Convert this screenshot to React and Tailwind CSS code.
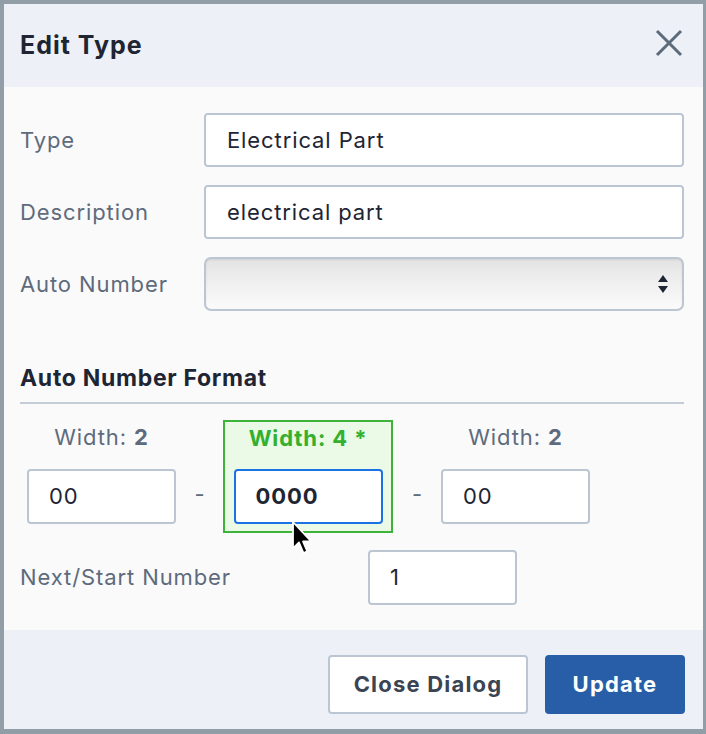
import React from "react";

function Cursor() {
  return (
    <svg className="absolute left-[285px] top-[514px]" width="26" height="40" viewBox="0 0 26 40">
      <path d="M4 4 L4 30.5 L10 24.5 L14.5 35 L18.3 33.3 L14 23.5 L22.2 23.5 Z" fill="#000" stroke="#fff" strokeWidth="1.8" strokeLinejoin="round" />
    </svg>
  );
}

const lbl = "text-[22px] tracking-[0.9px] text-[#5e6b7c]";
const inp = "bg-white border-2 border-[#bcc6d2] rounded-[4px] flex items-center text-[22px] tracking-[0.9px] text-[#1e2533]";

export default function App() {
  const font = { fontFamily: "Inter, 'Noto Sans', sans-serif" };
  return (
    <div style={font} className="relative w-[706px] h-[734px] border-[#919ea7] border-t-4 border-l-4 border-r-[3px] border-b-[5px] bg-[#fafafa] flex flex-col">
      <div className="h-[83px] bg-[#edf0f6] flex items-center justify-between pl-4 pr-[20px] shrink-0">
        <h1 className="text-[25px] font-bold text-[#1e2533] tracking-[1px]">Edit Type</h1>
        <svg width="28" height="28" viewBox="0 0 28 28" className="mt-[-6px]">
          <path d="M2 2 L26 26 M26 2 L2 26" stroke="#5c6b7b" strokeWidth="3" strokeLinecap="butt" />
        </svg>
      </div>

      <div className="flex-1 pl-4 pr-[18px] pt-[26px]">
        <div className="flex flex-col gap-[18px]">
          <div className="flex items-center">
            <label className={`w-[184px] ${lbl}`}>Type</label>
            <div className={`w-[480px] h-[54px] px-[21px] ${inp}`}>Electrical Part</div>
          </div>
          <div className="flex items-center">
            <label className={`w-[184px] ${lbl}`}>Description</label>
            <div className={`w-[480px] h-[54px] px-[21px] ${inp}`}>electrical part</div>
          </div>
          <div className="flex items-center">
            <label className={`w-[184px] ${lbl}`}>Auto Number</label>
            <div className="w-[480px] h-[54px] border-2 border-[#bcc6d2] rounded-[7px] flex items-center justify-end pr-[14px] bg-gradient-to-b from-[#e3e3e3] via-[#f0f0f0] to-[#fbfbfb] shadow-[inset_0_1px_2px_rgba(0,0,0,0.08)]">
              <svg width="10" height="20" viewBox="0 0 10 20">
                <path d="M5 1 L10 8 L0 8 Z M5 19 L10 12 L0 12 Z" fill="#1e2533" />
              </svg>
            </div>
          </div>
        </div>

        <div className="mt-[50px] text-[23px] font-bold tracking-[0.7px] text-[#1e2533]">Auto Number Format</div>
        <div className="mt-[6px] h-[2px] bg-[#c3ccd7] mr-[1px]"></div>

        <div className="flex items-start mt-[16px]">
          <div className="ml-[7px] w-[149px] flex flex-col items-center pt-[2px]">
            <div className={`${lbl} h-[30px] leading-[30px]`}>Width: <span className="font-bold">2</span></div>
            <div className={`mt-[17px] w-[149px] h-[55px] px-[20px] ${inp}`}>00</div>
          </div>
          <div className="w-[47px] flex justify-center pt-[58px] text-[22px] text-[#5e6b7c]">-</div>
          <div className="w-[170px] h-[113px] border-2 border-[#3db33a] bg-[#ebf9e7] flex flex-col items-center">
            <div className="text-[22px] tracking-[0.9px] font-bold text-[#34b02e] h-[30px] leading-[30px] mt-[1px]">Width: 4 *</div>
            <div className="mt-[16px] w-[149px] h-[55px] bg-white border-2 border-[#1a72e3] rounded-[4px] flex items-center px-[20px] text-[22px] tracking-[0.9px] font-bold text-[#1e2533]">0000</div>
          </div>
          <div className="w-[48px] flex justify-center pt-[58px] text-[22px] text-[#5e6b7c]">-</div>
          <div className="w-[149px] flex flex-col items-center pt-[2px]">
            <div className={`${lbl} h-[30px] leading-[30px]`}>Width: <span className="font-bold">2</span></div>
            <div className={`mt-[17px] w-[149px] h-[55px] px-[20px] ${inp}`}>00</div>
          </div>
        </div>

        <div className="flex items-center mt-[17px]">
          <label className={`w-[348px] ${lbl}`}>Next/Start Number</label>
          <div className={`w-[149px] h-[55px] px-[20px] ${inp}`}>1</div>
        </div>
      </div>

      <div className="h-[99px] bg-[#edf0f6] flex items-start justify-end gap-[17px] pr-[18px] pt-[25px] shrink-0">
        <button className="w-[200px] h-[59px] bg-white border-2 border-[#bcc6d2] rounded-[4px] text-[22px] tracking-[1.2px] font-bold text-[#3a4452]">Close Dialog</button>
        <button className="w-[140px] h-[59px] bg-[#275ea7] rounded-[4px] text-[22px] tracking-[1.2px] font-bold text-white">Update</button>
      </div>
      <Cursor />
    </div>
  );
}
